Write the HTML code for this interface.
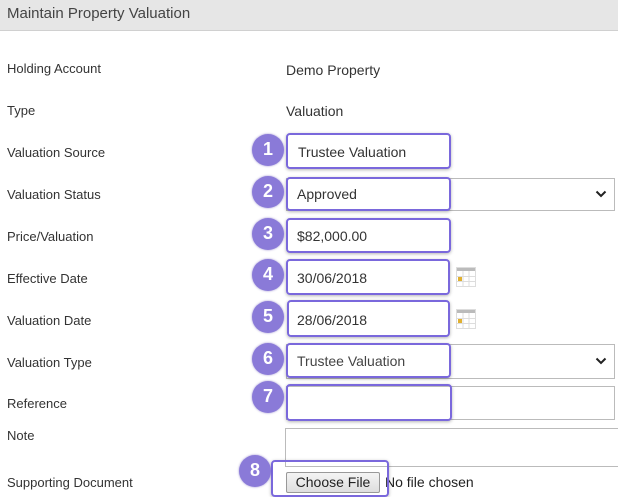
<!DOCTYPE html>
<html><head><style>
body{margin:0;width:618px;height:495px;overflow:hidden;background:#fff;font-family:"Liberation Sans",Arial,sans-serif;font-size:12px;color:#333;position:relative}
.hd{position:absolute;left:0;top:0;width:618px;height:30px;background:#e6e6e6;border-bottom:1px solid #d0d0d0}
.hd span{position:absolute;left:7px;top:5px;font-size:15px;color:#444}
.l{position:absolute;left:7px;font-size:13px;color:#333}
.v{position:absolute;left:286px;font-size:14px;color:#333}
.in{position:absolute;border:1px solid #bbb;background:#fff;box-sizing:border-box}
.pb{position:absolute;border:2px solid #7a68dc;border-radius:4px;box-sizing:border-box;box-shadow:0 1px 3px rgba(0,0,0,.3)}
.t{position:absolute;font-size:14px;color:#333}
.c{position:absolute;width:32px;height:32px;border-radius:50%;background:#8a7ad8;color:#fff;font-size:18px;font-weight:bold;text-align:center;line-height:31px;box-shadow:0 0 2px rgba(90,70,180,.6)}
.cal{position:absolute;width:20px;height:20px}
.chev{position:absolute}
</style></head><body>
<div class="hd"><span>Maintain Property Valuation</span></div>
<div class="l" style="top:61px">Holding Account</div><div class="v" style="top:62px">Demo Property</div>
<div class="l" style="top:103px">Type</div><div class="v" style="top:103px">Valuation</div>
<div class="l" style="top:145px">Valuation Source</div>
<div class="l" style="top:187px">Valuation Status</div>
<div class="l" style="top:229px">Price/Valuation</div>
<div class="l" style="top:271px">Effective Date</div>
<div class="l" style="top:313px">Valuation Date</div>
<div class="l" style="top:355px">Valuation Type</div>
<div class="l" style="top:396px">Reference</div>
<div class="l" style="top:428px">Note</div>
<div class="l" style="top:475px">Supporting Document</div>

<div class="in" style="left:286px;top:178px;width:329px;height:33px"></div>
<svg class="chev" style="left:595px;top:190px" width="12" height="8"><path d="M1.5 1.5 L6 6 L10.5 1.5" stroke="#222" stroke-width="2" fill="none"/></svg>
<div class="in" style="left:286px;top:344px;width:329px;height:35px"></div>
<svg class="chev" style="left:595px;top:357px" width="12" height="8"><path d="M1.5 1.5 L6 6 L10.5 1.5" stroke="#222" stroke-width="2" fill="none"/></svg>
<div class="in" style="left:286px;top:386px;width:329px;height:34px"></div>
<div class="in" style="left:285px;top:428px;width:340px;height:39px"></div>

<div class="pb" style="left:286px;top:133px;width:165px;height:36px"></div><div class="t" style="left:298px;top:144px">Trustee Valuation</div>
<div class="pb" style="left:286px;top:177px;width:165px;height:34px"></div><div class="t" style="left:297px;top:186px">Approved</div>
<div class="pb" style="left:286px;top:218px;width:165px;height:35px"></div><div class="t" style="left:297px;top:228px">$82,000.00</div>
<div class="pb" style="left:286px;top:259px;width:164px;height:36px"></div><div class="t" style="left:297px;top:270px">30/06/2018</div>
<div class="pb" style="left:287px;top:300px;width:163px;height:37px"></div><div class="t" style="left:297px;top:312px">28/06/2018</div>
<div class="pb" style="left:286px;top:343px;width:165px;height:35px"></div><div class="t" style="left:297px;top:353px;color:#444">Trustee Valuation</div>
<div class="pb" style="left:286px;top:384px;width:166px;height:37px"></div>

<svg class="cal" style="left:456px;top:267px" width="20" height="20"><rect x="0.5" y="0.5" width="19" height="19" fill="#fff" stroke="#ddd"/><rect x="1" y="1" width="18" height="3" fill="#bbb"/><path d="M1 9.5H19M1 14.5H19M7 4V19M13 4V19" stroke="#ddd"/><rect x="2" y="10" width="4" height="4" fill="#e0b030"/></svg>
<svg class="cal" style="left:456px;top:309px" width="20" height="20"><rect x="0.5" y="0.5" width="19" height="19" fill="#fff" stroke="#ddd"/><rect x="1" y="1" width="18" height="3" fill="#bbb"/><path d="M1 9.5H19M1 14.5H19M7 4V19M13 4V19" stroke="#ddd"/><rect x="2" y="10" width="4" height="4" fill="#e0b030"/></svg>

<div style="position:absolute;left:286px;top:472px;width:94px;height:21px;box-sizing:border-box;border:1px solid #999;border-radius:2px;background:linear-gradient(#f4f4f4,#dedede);font-size:14px;text-align:center;line-height:19px;color:#222">Choose File</div>
<div class="t" style="left:385px;top:474px;color:#222">No file chosen</div>
<div class="pb" style="left:271px;top:460px;width:118px;height:37px"></div>

<div class="c" style="left:252px;top:134px">1</div>
<div class="c" style="left:252px;top:176px">2</div>
<div class="c" style="left:252px;top:218px">3</div>
<div class="c" style="left:252px;top:259px">4</div>
<div class="c" style="left:252px;top:301px">5</div>
<div class="c" style="left:252px;top:343px">6</div>
<div class="c" style="left:252px;top:381px">7</div>
<div class="c" style="left:239px;top:455px">8</div>
</body></html>
